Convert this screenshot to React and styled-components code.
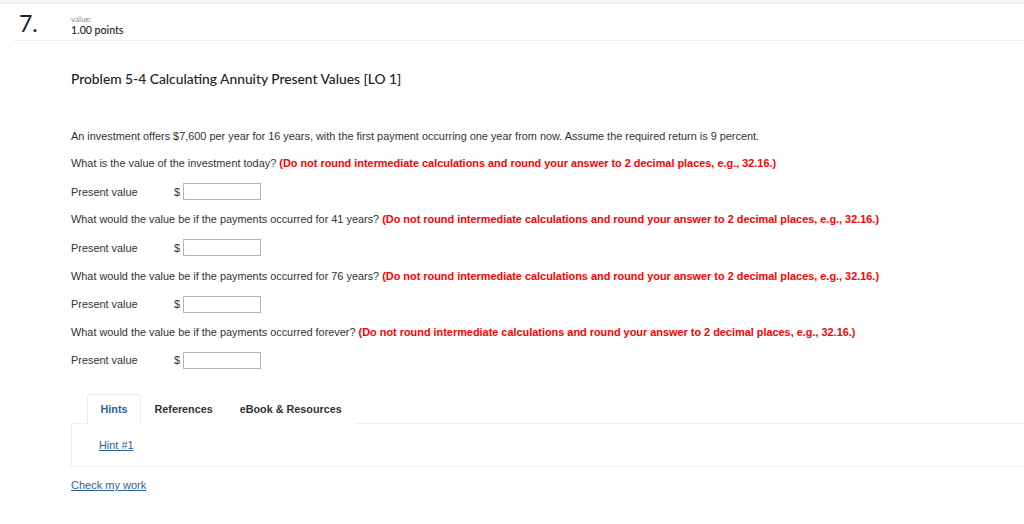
import React from "react";
import styled, { createGlobalStyle } from "styled-components";

const Global = createGlobalStyle`
  html, body { margin: 0; padding: 0; background: #fff; }
  body { font-family: "Liberation Sans", Arial, sans-serif; color: #333; }
`;

const Page = styled.div`
  width: 1024px;
  height: 524px;
  overflow: hidden;
  border-top: 3px solid #f5f5f5;
  box-sizing: border-box;
`;

const TopLine = styled.div`
  height: 1px;
  background: #ececec;
`;

const Header = styled.div`
  margin-left: 14px;
  height: 36px;
  border-bottom: 1px solid #ececec;
  display: flex;
  align-items: flex-start;
`;

const Num = styled.div`
  font-family: Lato, "Open Sans", sans-serif;
  font-size: 23px;
  line-height: 23px;
  color: #222;
  width: 57px;
  padding-left: 5px;
  padding-top: 8px;
  box-sizing: border-box;
`;

const Value = styled.div`
  font-family: Lato, "Open Sans", sans-serif;
  padding-top: 11px;
  display: flex;
  flex-direction: column;
`;

const ValueLabel = styled.span`
  font-size: 8px;
  line-height: 9px;
  color: #888;
`;

const Points = styled.span`
  font-size: 10.6px;
  line-height: 13px;
  color: #222;
  font-weight: 500;
`;

const Body = styled.div`
  padding-left: 71px;
`;

const Title = styled.h1`
  font-family: Lato, "Open Sans", sans-serif;
  font-weight: 500;
  font-size: 13.8px;
  line-height: 16px;
  color: #222;
  margin: 30px 0 0 0;
`;

const Para = styled.p`
  font-size: 10.9px;
  line-height: 13px;
  margin: 0;
  margin-top: ${(p) => p.$mt}px;
  color: #333;
  white-space: nowrap;
`;

const Warn = styled.b`
  color: #f00;
  font-weight: bold;
`;

const Row = styled.div`
  display: flex;
  align-items: center;
  margin-top: 13px;
  font-size: 10.9px;
  height: 17px;
`;

const Label = styled.span`
  width: 103px;
  color: #333;
`;

const Dollar = styled.span`
  width: 9px;
  color: #333;
`;

const Input = styled.input`
  width: 78px;
  height: 17px;
  box-sizing: border-box;
  border: 1px solid #b5b5b5;
  padding: 0;
  margin: 0;
  background: #fff;
`;

const Tabs = styled.div`
  margin-top: 25px;
  display: flex;
  padding-left: 16px;
  height: 29px;
  box-sizing: border-box;
`;

const Tab = styled.div`
  font-size: 10.8px;
  font-weight: bold;
  color: ${(p) => (p.$active ? "#2d5f99" : "#333")};
  padding: 0 12.5px;
  display: flex;
  align-items: center;
  height: 30px;
  box-sizing: border-box;
  border: 1px solid ${(p) => (p.$active ? "#ececec" : "transparent")};
  border-bottom: none;
  border-radius: 2px 2px 0 0;
  background: #fff;
  position: relative;
  z-index: 1;
`;

const Panel = styled.div`
  border: 1px solid #efefef;
  border-right: none;
  height: 44px;
  box-sizing: border-box;
  padding-left: 27px;
  padding-top: 15px;
  font-size: 10.9px;
  line-height: 13px;
`;

const Link = styled.a`
  font-size: 10.9px;
  color: #2d5f99;
  text-decoration: underline;
  line-height: 13px;
`;

const Check = styled.div`
  margin-top: 12px;
  font-size: 11px;
  line-height: 13px;
`;

const CheckLink = styled(Link)`
  font-size: 11px;
`;

const warnText =
  "(Do not round intermediate calculations and round your answer to 2 decimal places, e.g., 32.16.)";

const questions = [
  "What is the value of the investment today?",
  "What would the value be if the payments occurred for 41 years?",
  "What would the value be if the payments occurred for 76 years?",
  "What would the value be if the payments occurred forever?",
];

export default function App() {
  return (
    <Page>
      <Global />
      <TopLine />
      <Header>
        <Num>7.</Num>
        <Value>
          <ValueLabel>value:</ValueLabel>
          <Points>1.00 points</Points>
        </Value>
      </Header>
      <Body>
        <Title>Problem 5-4 Calculating Annuity Present Values [LO 1]</Title>
        <Para $mt={43}>
          An investment offers $7,600 per year for 16 years, with the first payment occurring one year from now. Assume the required return is 9 percent.
        </Para>
        {questions.map((q, i) => (
          <React.Fragment key={i}>
            <Para $mt={i === 0 ? 14 : 13.3}>
              {q} <Warn>{warnText}</Warn>
            </Para>
            <Row>
              <Label>Present value</Label>
              <Dollar>$</Dollar>
              <Input type="text" />
            </Row>
          </React.Fragment>
        ))}
        <Tabs>
          <Tab $active>Hints</Tab>
          <Tab>References</Tab>
          <Tab>eBook &amp; Resources</Tab>
        </Tabs>
        <Panel>
          <Link href="#">Hint #1</Link>
        </Panel>
        <Check>
          <CheckLink href="#">Check my work</CheckLink>
        </Check>
      </Body>
    </Page>
  );
}
